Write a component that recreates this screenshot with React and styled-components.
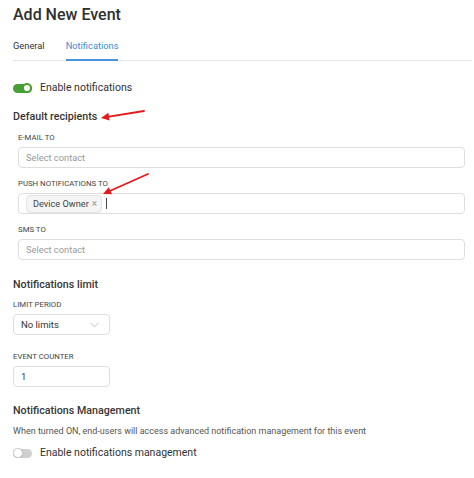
import React from "react";
import styled, { createGlobalStyle } from "styled-components";

const GlobalStyle = createGlobalStyle`
  html, body {
    margin: 0;
    padding: 0;
    background: #fff;
  }
  body {
    font-family: Roboto, "Liberation Sans", Arial, sans-serif;
    color: #333;
  }
`;

function Toggle({ on }) {
  return (
    <Track on={on ? 1 : 0}>
      <Knob on={on ? 1 : 0} />
    </Track>
  );
}

function Arrow({ x1, y1, x2, y2 }) {
  const ang = Math.atan2(y2 - y1, x2 - x1);
  const len = 9;
  const spread = 0.45;
  const p1 = [x2 - len * Math.cos(ang - spread), y2 - len * Math.sin(ang - spread)];
  const p2 = [x2 - len * Math.cos(ang + spread), y2 - len * Math.sin(ang + spread)];
  return (
    <ArrowSvg width="474" height="478">
      <line x1={x1} y1={y1} x2={x2 - 5 * Math.cos(ang)} y2={y2 - 5 * Math.sin(ang)} stroke="#e3191b" strokeWidth="1.8" strokeLinecap="round" />
      <polygon points={`${x2},${y2} ${p1[0]},${p1[1]} ${p2[0]},${p2[1]}`} fill="#e3191b" />
    </ArrowSvg>
  );
}

function App() {
  return (
    <Page>
      <GlobalStyle />
      <Title>Add New Event</Title>
      <Tabs>
        <Tab>General</Tab>
        <Tab active>Notifications</Tab>
      </Tabs>

      <SwitchRow space={19}>
        <Toggle on />
        <span>Enable notifications</span>
      </SwitchRow>

      <SectionTitle space={13}>Default recipients</SectionTitle>
      <Recipients>
        <Field>
          <Label>E-mail to</Label>
          <Input>
            <Placeholder>Select contact</Placeholder>
          </Input>
        </Field>
        <Field>
          <Label>Push notifications to</Label>
          <Input>
            <Chip>
              Device Owner <ChipClose>×</ChipClose>
            </Chip>
            <Caret />
          </Input>
        </Field>
        <Field>
          <Label>SMS to</Label>
          <Input>
            <Placeholder>Select contact</Placeholder>
          </Input>
        </Field>
      </Recipients>

      <SectionTitle space={17}>Notifications limit</SectionTitle>
      <Field gap={6}>
        <Label>Limit period</Label>
        <Input small>
          <Value>No limits</Value>
          <svg width="9" height="6" viewBox="0 0 9 6">
            <polyline points="0.5,0.8 4.5,4.8 8.5,0.8" fill="none" stroke="#b8b8b8" strokeWidth="0.9" />
          </svg>
        </Input>
      </Field>
      <Field gap={16}>
        <Label>Event counter</Label>
        <Input small>
          <Value>1</Value>
        </Input>
      </Field>

      <SectionTitle space={16}>Notifications Management</SectionTitle>
      <Description>When turned ON, end-users will access advanced notification management for this event</Description>
      <SwitchRow space={7}>
        <Toggle />
        <span>Enable notifications management</span>
      </SwitchRow>

      <Arrow x1={144} y1={111} x2={101} y2={118} />
      <Arrow x1={148} y1={174} x2={103} y2={194} />
    </Page>
  );
}

const Page = styled.div`
  position: relative;
  width: 474px;
  height: 478px;
  box-sizing: border-box;
  padding: 4px 2px 0 13px;
  display: flex;
  flex-direction: column;
  align-items: flex-start;
  overflow: hidden;
`;

const Title = styled.h1`
  margin: 0;
  font-size: 16px;
  line-height: 22px;
  font-weight: 500;
  color: #2f2f2f;
`;

const Tabs = styled.div`
  align-self: stretch;
  display: flex;
  gap: 21px;
  margin-top: 13px;
  border-bottom: 1px solid #e6e6e6;
`;

const Tab = styled.div`
  font-size: 9.3px;
  line-height: 14px;
  padding-bottom: 6px;
  color: ${(p) => (p.active ? "#3d8bd6" : "#333")};
  border-bottom: 2px solid ${(p) => (p.active ? "#4a93dc" : "transparent")};
  margin-bottom: -1px;
`;

const SwitchRow = styled.div`
  display: flex;
  align-items: center;
  gap: 8px;
  margin-top: ${(p) => p.space || 0}px;
  font-size: 10.5px;
  line-height: 16px;
  color: #333;
`;

const Track = styled.div`
  position: relative;
  width: 19px;
  height: 9px;
  border-radius: 5px;
  background: ${(p) => (p.on ? "#47a035" : "#cfcfcf")};
`;

const Knob = styled.div`
  position: absolute;
  top: -0.5px;
  left: ${(p) => (p.on ? "9px" : "0")};
  width: 10px;
  height: 10px;
  border-radius: 50%;
  background: #fff;
  box-sizing: border-box;
  border: ${(p) => (p.on ? "2px solid #47a035" : "1px solid #d0d0d0")};
  box-shadow: ${(p) => (p.on ? "none" : "0 0 1px rgba(0,0,0,0.2)")};
`;

const SectionTitle = styled.div`
  margin-top: ${(p) => p.space || 0}px;
  font-size: 10.7px;
  line-height: 16px;
  font-weight: 500;
  color: #363636;
`;

const Recipients = styled.div`
  align-self: stretch;
  display: flex;
  flex-direction: column;
  padding: 0 7px 0 5px;
  margin-top: 7px;
  gap: 10px;
`;

const Field = styled.div`
  display: flex;
  flex-direction: column;
  gap: 3px;
  align-self: stretch;
  margin-top: ${(p) => (p.gap ? `${p.gap}px` : "0")};
`;

const Label = styled.div`
  font-size: 7.8px;
  line-height: 12px;
  text-transform: uppercase;
  color: #444;
`;

const Input = styled.div`
  box-sizing: border-box;
  height: 21px;
  width: ${(p) => (p.small ? "97px" : "100%")};
  border: 1px solid #dedede;
  border-radius: 4px;
  display: flex;
  align-items: center;
  justify-content: ${(p) => (p.small ? "space-between" : "flex-start")};
  padding: ${(p) => (p.small ? "0 10px 0 7px" : "0 7px")};
  background: #fff;
`;

const Placeholder = styled.span`
  font-size: 9.3px;
  color: #9a9a9a;
`;

const Value = styled.span`
  font-size: 9.5px;
  color: #333;
`;

const Chip = styled.span`
  display: inline-flex;
  align-items: center;
  gap: 3px;
  height: 16px;
  padding: 0 4px 0 6px;
  border: 1px solid #e4e4e4;
  border-radius: 4px;
  background: #f5f5f5;
  font-size: 9.2px;
  color: #444;
`;

const ChipClose = styled.span`
  font-size: 10px;
  color: #999;
`;

const Caret = styled.span`
  width: 1px;
  height: 11px;
  margin-left: 4px;
  background: #444;
`;

const Description = styled.div`
  margin-top: 6px;
  font-size: 9px;
  line-height: 13px;
  color: #555;
`;

const ArrowSvg = styled.svg`
  position: absolute;
  left: 0;
  top: 0;
  pointer-events: none;
`;

export default App;
